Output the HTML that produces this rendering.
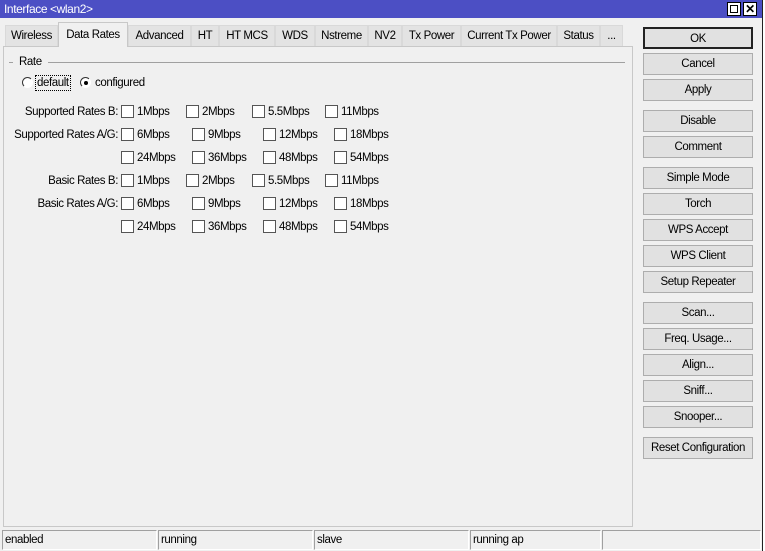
<!DOCTYPE html>
<html><head><meta charset="utf-8"><style>
*{margin:0;padding:0;box-sizing:border-box}
body{width:765px;height:551px;position:relative;overflow:hidden;background:#f0f0f0;font-family:"Liberation Sans",sans-serif;font-size:11.5px;line-height:16px;color:#000;letter-spacing:-0.4px}
.a{position:absolute;white-space:nowrap}
.title{left:0;top:0;width:762px;height:18px;background:#4c4fc4;color:#fff;padding:1px 0 0 4px;font-size:12px}
.tab{position:absolute;top:25px;height:22px;border:1px solid #d9d9d9;border-bottom:none;background:#e3e3e3;text-align:center;line-height:21px}
.tab.sel{top:22px;height:25px;background:#f0f0f0;border-color:#c8c8c8;line-height:24px;z-index:2}
.panel{position:absolute;left:3px;top:46px;width:630px;height:481px;border:1px solid #c8c8c8;background:#f0f0f0}
.btn{position:absolute;left:643px;width:110px;height:22px;border:1px solid #adadad;background:#e1e1e1;text-align:center;line-height:20px}
.cb{position:absolute;width:13px;height:13px;border:1px solid #555;background:#fff}
.lbl{position:absolute;text-align:right;width:118px;left:0}
.sb{position:absolute;top:530px;height:20px;border:1px solid #a0a0a0;border-right-color:#fff;border-bottom-color:#fff;padding:2px 2px;line-height:15px}
</style></head><body>
<div class="a title">Interface &lt;wlan2&gt;</div>
<div class="a" style="left:727px;top:2px;width:14px;height:14px;background:#fff;border:1px solid #000"><div style="position:absolute;left:2px;top:2px;width:8px;height:8px;border:1px solid #000"></div></div>
<div class="a" style="left:743px;top:2px;width:14px;height:14px;background:#fff;border:1px solid #000;font-size:12px;line-height:12px;text-align:center;font-weight:bold">✕</div>
<div class="a" style="left:762px;top:0;width:3px;height:551px;background:#fff;border-left:1px solid #222"></div>

<div class="tab" style="left:5px;width:53px">Wireless</div>
<div class="tab sel" style="left:58px;width:70px">Data Rates</div>
<div class="tab" style="left:128px;width:63px">Advanced</div>
<div class="tab" style="left:191px;width:28px">HT</div>
<div class="tab" style="left:219px;width:56px">HT MCS</div>
<div class="tab" style="left:275px;width:40px">WDS</div>
<div class="tab" style="left:315px;width:53px">Nstreme</div>
<div class="tab" style="left:368px;width:34px">NV2</div>
<div class="tab" style="left:402px;width:59px">Tx Power</div>
<div class="tab" style="left:461px;width:96px">Current Tx Power</div>
<div class="tab" style="left:557px;width:43px">Status</div>
<div class="tab" style="left:600px;width:23px">...</div>
<div class="panel"></div>

<div class="a" style="left:9px;top:62px;width:4px;border-top:1px solid #a0a0a0"></div>
<div class="a" style="left:19px;top:54px">Rate</div>
<div class="a" style="left:48px;top:62px;width:577px;border-top:1px solid #a0a0a0"></div>

<div class="a" style="left:22px;top:77px;width:11px;height:11px;border-radius:50%;border:1px solid #333;border-right-color:#fff;border-bottom-color:#fff;background:#fff"></div>
<div class="a" style="left:35px;top:75px;border:1px dotted #000;padding:0 1px;line-height:14px">default</div>
<div class="a" style="left:80px;top:77px;width:11px;height:11px;border-radius:50%;border:1px solid #333;border-right-color:#fff;border-bottom-color:#fff;background:#fff"><div style="position:absolute;left:3px;top:3px;width:4px;height:4px;border-radius:50%;background:#000"></div></div>
<div class="a" style="left:95px;top:75px">configured</div>

<div class="lbl" style="top:104px">Supported Rates B:</div>
<div class="lbl" style="top:127px">Supported Rates A/G:</div>
<div class="lbl" style="top:173px">Basic Rates B:</div>
<div class="lbl" style="top:196px">Basic Rates A/G:</div>

<div class="cb" style="left:121px;top:105px"></div><div class="a" style="left:137px;top:104px">1Mbps</div>
<div class="cb" style="left:186px;top:105px"></div><div class="a" style="left:202px;top:104px">2Mbps</div>
<div class="cb" style="left:252px;top:105px"></div><div class="a" style="left:268px;top:104px">5.5Mbps</div>
<div class="cb" style="left:325px;top:105px"></div><div class="a" style="left:341px;top:104px">11Mbps</div>

<div class="cb" style="left:121px;top:174px"></div><div class="a" style="left:137px;top:173px">1Mbps</div>
<div class="cb" style="left:186px;top:174px"></div><div class="a" style="left:202px;top:173px">2Mbps</div>
<div class="cb" style="left:252px;top:174px"></div><div class="a" style="left:268px;top:173px">5.5Mbps</div>
<div class="cb" style="left:325px;top:174px"></div><div class="a" style="left:341px;top:173px">11Mbps</div>

<div class="cb" style="left:121px;top:128px"></div><div class="a" style="left:137px;top:127px">6Mbps</div>
<div class="cb" style="left:192px;top:128px"></div><div class="a" style="left:208px;top:127px">9Mbps</div>
<div class="cb" style="left:263px;top:128px"></div><div class="a" style="left:279px;top:127px">12Mbps</div>
<div class="cb" style="left:334px;top:128px"></div><div class="a" style="left:350px;top:127px">18Mbps</div>
<div class="cb" style="left:121px;top:151px"></div><div class="a" style="left:137px;top:150px">24Mbps</div>
<div class="cb" style="left:192px;top:151px"></div><div class="a" style="left:208px;top:150px">36Mbps</div>
<div class="cb" style="left:263px;top:151px"></div><div class="a" style="left:279px;top:150px">48Mbps</div>
<div class="cb" style="left:334px;top:151px"></div><div class="a" style="left:350px;top:150px">54Mbps</div>

<div class="cb" style="left:121px;top:197px"></div><div class="a" style="left:137px;top:196px">6Mbps</div>
<div class="cb" style="left:192px;top:197px"></div><div class="a" style="left:208px;top:196px">9Mbps</div>
<div class="cb" style="left:263px;top:197px"></div><div class="a" style="left:279px;top:196px">12Mbps</div>
<div class="cb" style="left:334px;top:197px"></div><div class="a" style="left:350px;top:196px">18Mbps</div>
<div class="cb" style="left:121px;top:220px"></div><div class="a" style="left:137px;top:219px">24Mbps</div>
<div class="cb" style="left:192px;top:220px"></div><div class="a" style="left:208px;top:219px">36Mbps</div>
<div class="cb" style="left:263px;top:220px"></div><div class="a" style="left:279px;top:219px">48Mbps</div>
<div class="cb" style="left:334px;top:220px"></div><div class="a" style="left:350px;top:219px">54Mbps</div>

<div class="btn" style="top:27px;border:2px solid #222">OK</div>
<div class="btn" style="top:53px">Cancel</div>
<div class="btn" style="top:79px">Apply</div>
<div class="btn" style="top:110px">Disable</div>
<div class="btn" style="top:136px">Comment</div>
<div class="btn" style="top:167px">Simple Mode</div>
<div class="btn" style="top:193px">Torch</div>
<div class="btn" style="top:219px">WPS Accept</div>
<div class="btn" style="top:245px">WPS Client</div>
<div class="btn" style="top:271px">Setup Repeater</div>
<div class="btn" style="top:302px">Scan...</div>
<div class="btn" style="top:328px">Freq. Usage...</div>
<div class="btn" style="top:354px">Align...</div>
<div class="btn" style="top:380px">Sniff...</div>
<div class="btn" style="top:406px">Snooper...</div>
<div class="btn" style="top:437px">Reset Configuration</div>

<div class="sb" style="left:2px;width:155px">enabled</div>
<div class="sb" style="left:158px;width:155px">running</div>
<div class="sb" style="left:314px;width:155px">slave</div>
<div class="sb" style="left:470px;width:131px">running ap</div>
<div class="sb" style="left:602px;width:159px"></div>
</body></html>
